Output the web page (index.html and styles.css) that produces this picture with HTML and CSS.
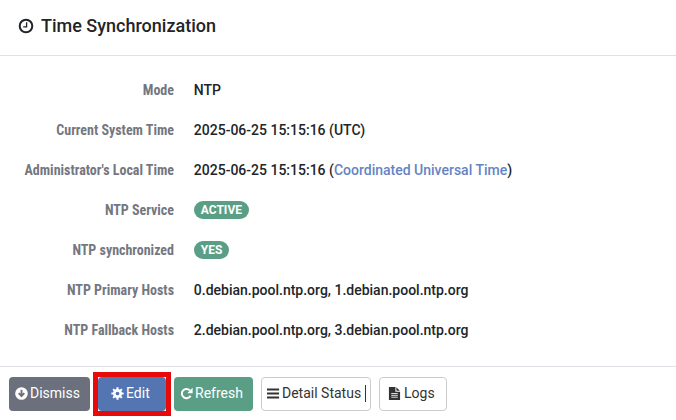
FILE: index.html
```html
<!DOCTYPE html>
<html lang="en">
<head>
    <meta charset="UTF-8">
    <title>Time Synchronization</title>
    <link rel="stylesheet" href="styles.css">
</head>
<body>
    <div class="panel">
        <div class="panel-header">
            <svg class="clock" viewBox="0 0 16 16" width="16" height="16">
                <circle cx="8" cy="8" r="6.3" fill="none" stroke="currentColor" stroke-width="2"/>
                <path d="M8.6 4.2v4.6H5.2" fill="none" stroke="currentColor" stroke-width="1.3"/>
            </svg>
            <h1>Time Synchronization</h1>
        </div>

        <div class="panel-body">
            <div class="row">
                <div class="label">Mode</div>
                <div class="value">NTP</div>
            </div>
            <div class="row">
                <div class="label">Current System Time</div>
                <div class="value">2025-06-25 15:15:16 (UTC)</div>
            </div>
            <div class="row">
                <div class="label">Administrator's Local Time</div>
                <div class="value">2025-06-25 15:15:16 (<a href="#">Coordinated Universal Time</a>)</div>
            </div>
            <div class="row">
                <div class="label">NTP Service</div>
                <div class="value"><span class="pill">ACTIVE</span></div>
            </div>
            <div class="row">
                <div class="label">NTP synchronized</div>
                <div class="value"><span class="pill">YES</span></div>
            </div>
            <div class="row">
                <div class="label">NTP Primary Hosts</div>
                <div class="value">0.debian.pool.ntp.org, 1.debian.pool.ntp.org</div>
            </div>
            <div class="row">
                <div class="label">NTP Fallback Hosts</div>
                <div class="value">2.debian.pool.ntp.org, 3.debian.pool.ntp.org</div>
            </div>
        </div>

        <div class="panel-footer">
            <button class="btn btn-gray">
                <svg class="icon" viewBox="0 0 14 14" width="13" height="13">
                    <circle cx="7" cy="7" r="6.8" fill="currentColor"/>
                    <path d="M7 3v6.2M4 6.6L7 9.8l3-3.2" fill="none" stroke="#6c6f7c" stroke-width="2"/>
                </svg>Dismiss
            </button>
            <div class="marked">
                <button class="btn btn-blue">
                    <svg class="icon" viewBox="0 0 14 14" width="13" height="13">
                        <circle cx="7" cy="7" r="4.9" fill="currentColor"/>
                        <path d="M7 0.4v13.2M0.4 7h13.2M2.3 2.3l9.4 9.4M11.7 2.3l-9.4 9.4" stroke="currentColor" stroke-width="2.2"/>
                        <circle cx="7" cy="7" r="2" fill="#5375b1"/>
                    </svg>Edit
                </button>
            </div>
            <button class="btn btn-green">
                <svg class="icon" viewBox="0 0 14 14" width="13" height="13">
                    <path d="M11.4 9.4A5 5 0 1 1 10.6 3.6" fill="none" stroke="currentColor" stroke-width="2.2"/>
                    <path d="M13.6 0.8v5.8H7.8z" fill="currentColor"/>
                </svg>Refresh
            </button>
            <button class="btn btn-plain btn-detail">
                <svg class="icon" viewBox="0 0 14 14" width="13" height="13">
                    <path d="M0 1.5h13v2.4H0zM0 5.8h13v2.4H0zM0 10.1h13v2.4H0z" fill="#333"/>
                </svg>Detail Status<span class="caret"></span>
            </button>
            <button class="btn btn-plain btn-logs">
                <svg class="icon" viewBox="0 0 14 14" width="13" height="13">
                    <path d="M1 0h7v5h5v9H1z" fill="#333"/>
                    <path d="M9 0.3L12.8 4H9z" fill="#333"/>
                    <path d="M3.5 7h7M3.5 9h7M3.5 11h7" stroke="#fff" stroke-width="0.9"/>
                </svg>Logs
            </button>
        </div>
    </div>
</body>
</html>
```

FILE: styles.css
```css
* {
    margin: 0;
    padding: 0;
    box-sizing: border-box;
}

body {
    font-family: Roboto, 'Liberation Sans', sans-serif;
    font-size: 14px;
    color: #212529;
    background: #fff;
}

.panel {
    width: 676px;
    height: 420px;
    display: flex;
    flex-direction: column;
}

.panel-header {
    flex: none;
    height: 56px;
    padding: 0 18px 4px;
    display: flex;
    align-items: center;
    gap: 7px;
    border-bottom: 1px solid #dee2e6;
}

.clock {
    color: #212529;
}

h1 {
    font-size: 18px;
    font-weight: 500;
}

.panel-body {
    flex: none;
    height: 310px;
    padding-top: 14px;
}

.row {
    display: flex;
    align-items: center;
    height: 40px;
    gap: 19.8px;
}

.label {
    width: 174px;
    text-align: right;
    font-weight: 700;
    font-stretch: condensed;
    color: #74777f;
    white-space: nowrap;
}

.value {
    font-weight: 500;
}

.value a {
    color: #6583c4;
    text-decoration: none;
}

.pill {
    display: inline-block;
    background: #5a9e86;
    color: #fff;
    font-size: 12px;
    font-weight: 700;
    line-height: 18px;
    padding: 0 7px;
    border-radius: 9px;
}

.panel-footer {
    border-top: 1px solid #dee2e6;
    padding: 10px 9px;
    display: flex;
    gap: 8px;
}

.btn {
    height: 34px;
    font-family: inherit;
    font-size: 14px;
    border: 1px solid transparent;
    border-radius: 4px;
    display: flex;
    align-items: center;
    gap: 2px;
    padding: 0 0 2px 5px;
    color: #fff;
    white-space: nowrap;
}

.icon {
    flex: none;
}

.btn-gray {
    width: 81px;
    background: #6c6f7c;
}

.btn-blue {
    width: 68px;
    padding-left: 12px;
    background: #5375b1;
}

.marked {
    margin: -5px;
    border: 5px solid #e60a0a;
}

.btn-green {
    width: 79px;
    background: #5a9e86;
}

.btn-plain {
    background: #fff;
    border-color: #ccc;
    color: #333;
}

.btn-detail {
    width: 110px;
}

.btn-logs {
    width: 68px;
    padding-left: 8px;
    gap: 3px;
}

.caret {
    width: 1px;
    height: 17px;
    margin-left: 2px;
    background: #333;
}
```
